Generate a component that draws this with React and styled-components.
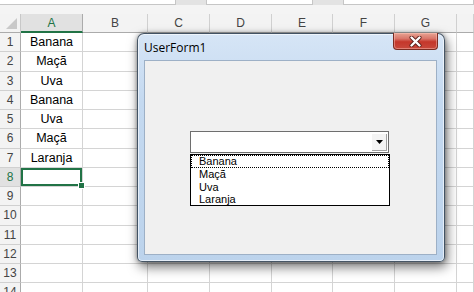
import React from "react";
import styled, { createGlobalStyle, css } from "styled-components";

const GlobalStyle = createGlobalStyle`
  html, body {
    margin: 0;
    padding: 0;
    background: #ffffff;
    overflow: hidden;
  }
`;

const Screen = styled.div`
  position: relative;
  width: 474px;
  height: 292px;
  overflow: hidden;
  background: #ffffff;
  font-family: "Liberation Sans", Arial, sans-serif;
`;

const TopStrip = styled.div`
  display: flex;
  height: 5px;
  background: #e3e3e3;
  gap: 30px;
`;

const BarBox = styled.div`
  width: ${(p) => p.w}px;
  flex: ${(p) => (p.grow ? 1 : "none")};
  background: #ffffff;
  border-bottom: 1px solid #c6c6c6;
  border-left: ${(p) => (p.first ? "none" : "1px solid #c6c6c6")};
  border-right: 1px solid #c6c6c6;
`;

const Gap = styled.div`
  height: 9px;
  background: #f4f4f4;
`;

const Sheet = styled.div`
  display: grid;
  grid-template-columns: 21px 62px 65px 62px 62px 61px 62px 62px 17px;
  grid-template-rows: 19px;
  grid-auto-rows: 19.25px;
`;

const Corner = styled.div`
  position: relative;
  background: #f3f3f3;
  border-right: 1px solid #c8c8c8;
  border-bottom: 1px solid #ababab;
  box-sizing: border-box;
  &::after {
    content: "";
    position: absolute;
    right: 3px;
    bottom: 3px;
    border-style: solid;
    border-width: 0 0 11px 11px;
    border-color: transparent transparent #c9c9c9 transparent;
  }
`;

const ColHead = styled.div`
  box-sizing: border-box;
  display: flex;
  align-items: center;
  justify-content: center;
  font-size: 12px;
  color: #444444;
  background: #f3f3f3;
  border-right: 1px solid #d0d0d0;
  border-bottom: 1px solid #ababab;
  ${(p) =>
    p.selected &&
    css`
      background: #e1e1e1;
      color: #217346;
      border-bottom: 2px solid #217346;
      border-right-color: #ababab;
    `}
`;

const RowHead = styled.div`
  box-sizing: border-box;
  display: flex;
  align-items: center;
  justify-content: center;
  font-size: 12px;
  color: ${(p) => (p.selected ? "#217346" : "#444444")};
  background: ${(p) => (p.selected ? "#e1e1e1" : "#f3f3f3")};
  border-right: 1px solid #ababab;
  border-bottom: 1px solid #d0d0d0;
`;

const Cell = styled.div`
  position: relative;
  box-sizing: border-box;
  display: flex;
  align-items: center;
  justify-content: center;
  font-size: 12.5px;
  color: #000000;
  border-right: 1px solid #d4d4d4;
  border-bottom: 1px solid #d4d4d4;
  ${(p) =>
    p.selected &&
    css`
      box-shadow: inset 0 0 0 2px #217346;
      &::after {
        content: "";
        position: absolute;
        right: -3px;
        bottom: -3px;
        width: 5px;
        height: 5px;
        background: #217346;
        border: 1px solid #ffffff;
        z-index: 2;
      }
    `}
`;

const Window = styled.div`
  position: absolute;
  left: 137px;
  top: 33px;
  width: 308px;
  height: 229px;
  box-sizing: border-box;
  display: flex;
  flex-direction: column;
  border: 1px solid rgba(35, 50, 65, 0.8);
  border-radius: 7px 7px 5px 5px;
  background: linear-gradient(180deg, #d6e5f6 0%, #c4d9f0 30%, #bcd3ec 100%);
  box-shadow: 2px 5px 12px rgba(0, 0, 0, 0.55), 0 0 4px rgba(0, 0, 0, 0.35),
    inset 0 0 0 1px rgba(255, 255, 255, 0.6);
  z-index: 5;
`;

const TitleBar = styled.div`
  display: flex;
  justify-content: space-between;
  align-items: flex-start;
  height: 26px;
  padding: 0 6px 0 6px;
`;

const Title = styled.span`
  margin-top: 5px;
  font-family: "Open Sans", "Noto Sans", sans-serif;
  font-size: 12px;
  color: #000000;
`;

const CloseButton = styled.div`
  display: flex;
  align-items: center;
  justify-content: center;
  width: 45px;
  height: 17px;
  margin-top: -1px;
  box-sizing: border-box;
  border: 1px solid #7a2c22;
  border-top: none;
  border-radius: 0 0 4px 4px;
  background: linear-gradient(180deg, #e8a493 0%, #d9766a 35%, #c4372b 55%, #c8493c 100%);
  box-shadow: inset 0 0 0 1px rgba(255, 200, 190, 0.45);
`;

const Client = styled.div`
  flex: 1;
  margin: 0 7px 6px 6px;
  padding: 70px 0 0 45px;
  background: #f0f0f0;
  border: 1px solid #9db0c6;
`;

const Combo = styled.div`
  display: flex;
  flex-direction: column;
  width: 200px;
  font-family: "Liberation Sans", Arial, sans-serif;
  font-size: 11px;
`;

const ComboField = styled.div`
  display: flex;
  justify-content: flex-end;
  height: 22px;
  width: 199px;
  box-sizing: border-box;
  padding: 1px;
  background: #ffffff;
  border: 1px solid #6e6e6e;
`;

const DropButton = styled.div`
  display: flex;
  align-items: center;
  justify-content: center;
  width: 16px;
  background: #f4f4f4;
  box-shadow: inset 1px 1px 0 #ffffff, inset -1px -1px 0 #a0a0a0;
`;

const List = styled.div`
  margin-top: 1px;
  height: 52px;
  box-sizing: border-box;
  padding-top: 0;
  background: #ffffff;
  border: 1px solid #000000;
`;

const Item = styled.div`
  height: 12.5px;
  line-height: 12px;
  padding-left: 8px;
  color: #000000;
  box-sizing: border-box;
  ${(p) =>
    p.focused &&
    css`
      height: 13px;
      outline: 1px dotted #000000;
      outline-offset: -1px;
    `}
`;

const columns = ["A", "B", "C", "D", "E", "F", "G", ""];
const data = ["Banana", "Maçã", "Uva", "Banana", "Uva", "Maçã", "Laranja"];
const items = ["Banana", "Maçã", "Uva", "Laranja"];

const App = () => {
  const rows = [];
  for (let r = 1; r <= 14; r++) {
    rows.push(
      <React.Fragment key={r}>
        <RowHead selected={r === 8}>{r}</RowHead>
        {columns.map((c, i) => (
          <Cell key={c + i} selected={r === 8 && i === 0}>
            {i === 0 ? data[r - 1] || "" : ""}
          </Cell>
        ))}
      </React.Fragment>
    );
  }

  return (
    <Screen>
      <GlobalStyle />
      <TopStrip>
        <BarBox w={175} first />
        <BarBox w={105} />
        <BarBox grow />
      </TopStrip>
      <Gap />
      <Sheet>
        <Corner />
        {columns.map((c, i) => (
          <ColHead key={"h" + i} selected={c === "A"}>
            {c}
          </ColHead>
        ))}
        {rows}
      </Sheet>

      <Window>
        <TitleBar>
          <Title>UserForm1</Title>
          <CloseButton>
            <svg width="13" height="11" viewBox="0 0 13 11">
              <path d="M2.5 1.5 L10.5 9.5 M10.5 1.5 L2.5 9.5" stroke="#5a1e18" strokeWidth="4" strokeLinecap="round" />
              <path d="M2.5 1.5 L10.5 9.5 M10.5 1.5 L2.5 9.5" stroke="#ffffff" strokeWidth="2.4" strokeLinecap="round" />
            </svg>
          </CloseButton>
        </TitleBar>
        <Client>
          <Combo>
            <ComboField>
              <DropButton>
                <svg width="7" height="4" viewBox="0 0 7 4">
                  <polygon points="0,0 7,0 3.5,4" fill="#000000" />
                </svg>
              </DropButton>
            </ComboField>
            <List>
              {items.map((it, i) => (
                <Item key={it} focused={i === 0}>
                  {it}
                </Item>
              ))}
            </List>
          </Combo>
        </Client>
      </Window>
    </Screen>
  );
};

export default App;
